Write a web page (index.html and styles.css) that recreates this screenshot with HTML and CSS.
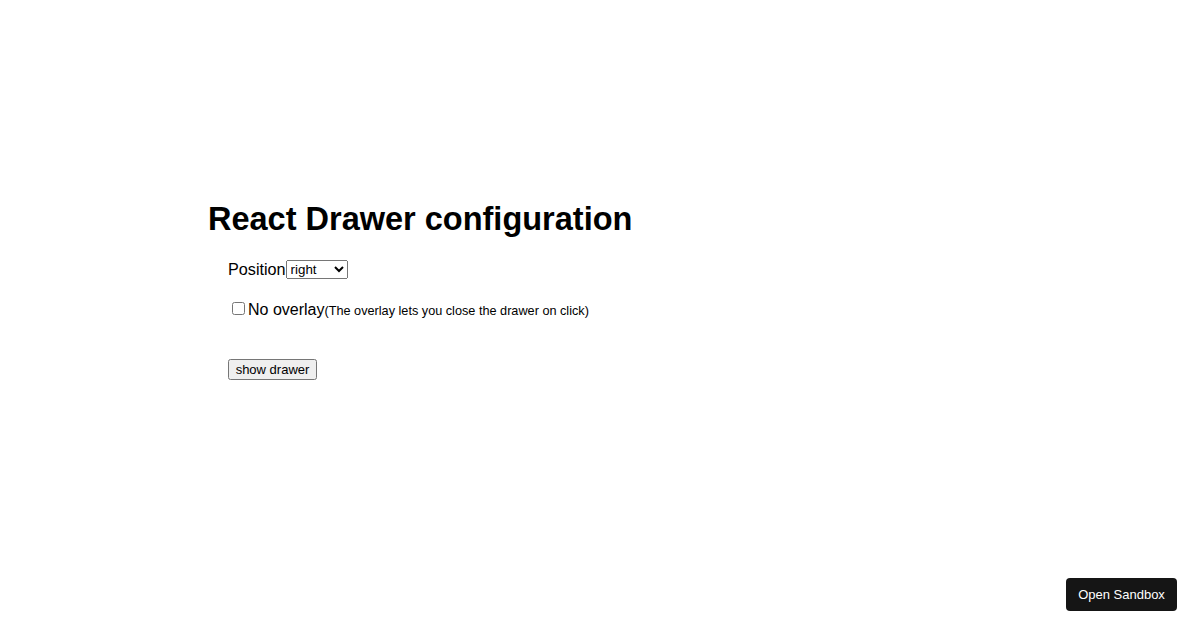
FILE: index.html
```html
<!DOCTYPE html>
<html>
<head>
<meta charset="utf-8">
<link rel="stylesheet" href="styles.css">
</head>
<body>
<div class="app">
  <h1 class="title">React Drawer configuration</h1>
  <div class="options">
    <div class="row row-position">
      <label class="label">Position</label><select class="select"><option>left</option><option selected>right</option><option>top</option><option>bottom</option></select>
    </div>
    <div class="row row-overlay">
      <input type="checkbox" class="check" id="ov"><label for="ov" class="label">No overlay</label><span class="hint">(The overlay lets you close the drawer on click)</span>
    </div>
  </div>
  <button class="show">show drawer</button>
</div>
<a class="sandbox">Open Sandbox</a>
</body>
</html>
```
FILE: styles.css
```css
html, body {
  margin: 0;
  padding: 0;
  background: #fff;
}
body {
  font-family: "Liberation Sans", Arial, sans-serif;
  color: #000;
}
.app {
  padding: 180px 0 0 208px;
}
.title {
  font-size: 32.5px;
  font-weight: bold;
  margin: 21px 0 20px 0;
  line-height: 37px;
}
.options {
  padding-left: 20px;
}
.row {
  font-size: 16.2px;
}
.row-position {
  display: flex;
  align-items: center;
  height: 22px;
}
.select {
  font-family: "Liberation Sans", Arial, sans-serif;
  font-size: 13.33px;
  width: 62px;
  height: 19px;
  margin: 0;
}
.row-overlay {
  margin-top: 21px;
  display: flex;
  align-items: baseline;
  font-size: 16px;
}
.check {
  margin: 0 3px 0 4px;
  width: 13px;
  height: 13px;
}
.hint {
  font-size: 12.7px;
}
.show {
  margin: 40px 0 0 20px;
  font-family: "Liberation Sans", Arial, sans-serif;
  font-size: 13px;
  padding: 1px 4px;
  width: 89px;
  height: 21px;
  white-space: nowrap;
}
.sandbox {
  position: fixed;
  right: 23px;
  bottom: 19px;
  width: 111px;
  height: 33px;
  box-sizing: border-box;
  background: #151515;
  color: #fff;
  border-radius: 4px;
  font-family: "Liberation Sans", Arial, sans-serif;
  font-size: 13px;
  display: flex;
  align-items: center;
  justify-content: center;
}
```
